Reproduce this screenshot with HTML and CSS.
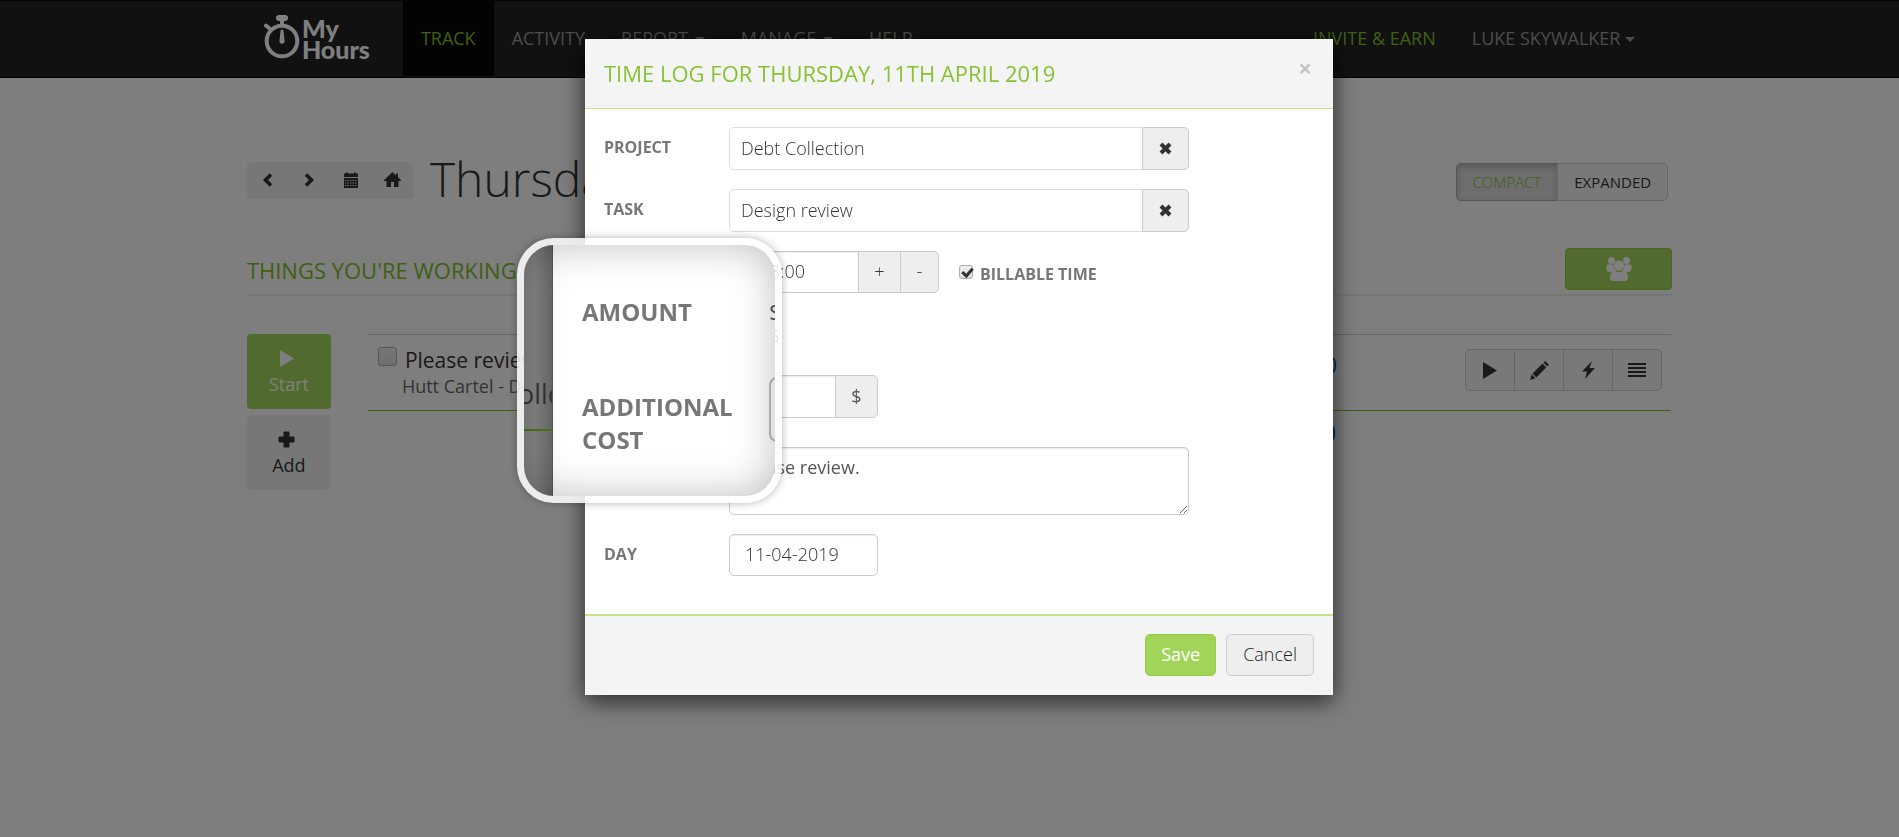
FILE: index.html
```html
<!DOCTYPE html>
<html lang="en">
<head>
<meta charset="utf-8">
<title>My Hours</title>
<link rel="stylesheet" href="styles.css">
</head>
<body>
<header class="topbar">
  <div class="container topbar-inner">
    <a class="logo" href="#">
      <svg class="logo-mark" viewBox="0 0 36 46" width="36" height="46" aria-hidden="true">
        <circle cx="18" cy="27" r="15.3" fill="none" stroke="currentColor" stroke-width="4"/>
        <rect x="12" y="1" width="12" height="6" rx="3" fill="currentColor"/>
        <path d="M16 6h4v5h-4zM18 15.500a1.500 1.500 0 0 1 1.500 1.500l1 9.500a2.600 2.600 0 1 1-5 0l1-9.500a1.500 1.500 0 0 1 1.500-1.500z" fill="currentColor"/>
        <path d="M2 11.500l3 2.500" stroke="currentColor" stroke-width="4" stroke-linecap="round"/>
      </svg>
      <span class="logo-text">My<br>Hours</span>
    </a>
    <nav class="nav">
      <a class="active" href="#">TRACK</a>
      <a href="#">ACTIVITY</a>
      <a href="#">REPORT <i class="caret"></i></a>
      <a href="#">MANAGE <i class="caret"></i></a>
      <a href="#">HELP</a>
    </nav>
    <nav class="nav nav-right">
      <a class="invite" href="#">INVITE &amp; EARN</a>
      <a href="#">LUKE SKYWALKER <i class="caret"></i></a>
    </nav>
  </div>
</header>

<main class="container">
  <div class="day-row">
    <div class="day-nav">
      <button aria-label="Previous day"><svg width="16" height="16" viewBox="0 0 16 16"><path d="M11 2.500L5.500 8l5.500 5.500" fill="none" stroke="currentColor" stroke-width="3.600"/></svg></button>
      <button aria-label="Next day"><svg width="16" height="16" viewBox="0 0 16 16"><path d="M5 2.500L10.500 8 5 13.500" fill="none" stroke="currentColor" stroke-width="3.600"/></svg></button>
      <button aria-label="Calendar"><svg width="16" height="16" viewBox="0 0 16 16"><path d="M1 1.500h2V.5h2v1h6v-1h2v1h2V5H1z" fill="currentColor"/><path d="M1 6h14v10H1z" fill="currentColor"/><path d="M2 8.500h12M2 11h12M2 13.500h12" stroke="#ddd" stroke-width="1" stroke-dasharray="1.500 1"/></svg></button>
      <button aria-label="Today"><svg width="17" height="16" viewBox="0 0 17 16"><path d="M8.500 0l3.500 3.400V1.500h2v3.800L17 8.200v.8h-2.500v6H10v-5H7v5H2.500V9H0v-.8z" fill="currentColor"/></svg></button>
    </div>
    <h1 class="day-title">Thursday, 11th April 2019</h1>
    <div class="view-toggle">
      <button class="pressed">COMPACT</button><button>EXPANDED</button>
    </div>
  </div>

  <div class="section-head">
    <h2>THINGS YOU'RE WORKING ON</h2>
    <button class="team" aria-label="Team">
      <svg width="26" height="26" viewBox="0 0 26 26"><g fill="currentColor"><circle cx="5.500" cy="4.500" r="3.500"/><circle cx="20.500" cy="4.500" r="3.500"/><path d="M.5 9.500c1-1.500 5-1.500 7-.5 0 3 1 4.500 2.500 5.500l-2 1.500H3C.5 16 0 12 .5 9.500zM25.500 9.500c-1-1.500-5-1.500-7-.5 0 3-1 4.500-2.500 5.500l2 1.500h5c2.500 0 3-4 2.500-6.500z"/><circle cx="13" cy="9.500" r="5.200"/><path d="M8.500 14.500c2.500 2 6.500 2 9 0 3.500.5 4.500 4.500 4.500 8 0 1.500-1 2.500-2.500 2.500h-13C5 25 4 24 4 22.500c0-3.500 1-7.500 4.500-8z"/></g></svg>
    </button>
  </div>

  <div class="work">
    <div class="side">
      <button class="side-btn start"><svg width="14" height="17" viewBox="0 0 14 17"><path d="M0 0l14 8.500L0 17z" fill="currentColor"/></svg>Start</button>
      <button class="side-btn add"><svg width="17" height="17" viewBox="0 0 17 17"><path d="M6 1h5v5h5v5h-5v5H6v-5H1V6h5z" fill="currentColor" stroke="currentColor" stroke-linejoin="round"/></svg>Add</button>
    </div>
    <div class="logs">
      <div class="log">
        <input type="checkbox" class="log-check" id="log1">
        <div class="log-text">
          <label for="log1">Please review.</label>
          <span>Hutt Cartel - Debt Collection</span>
        </div>
        <div class="log-time">8:00</div>
        <div class="log-actions">
          <button aria-label="Start"><svg width="14" height="17" viewBox="0 0 14 17"><path d="M0 0l14 8.500L0 17z" fill="currentColor"/></svg></button>
          <button aria-label="Edit"><svg width="19" height="19" viewBox="0 0 19 19"><path d="M12.500 2.600l3.800 3.800L6.300 16.400 2.500 12.600zM13.500 1.600L15.100 0l3.800 3.800-1.600 1.600zM1.700 13.500l3.700 3.700L0 19z" fill="currentColor"/></svg></button>
          <button aria-label="Quick log"><svg width="13" height="18" viewBox="0 0 13 18"><path d="M10 0L0 10.500h5L3 18 13 7H7.500z" fill="currentColor"/></svg></button>
          <button aria-label="Details"><svg width="18" height="16" viewBox="0 0 18 16"><path d="M0 2h18M0 6h18M0 10h18M0 14h18" stroke="currentColor" stroke-width="2.200"/></svg></button>
        </div>
      </div>
      <div class="total">8:00</div>
    </div>
  </div>
</main>

<div class="backdrop">
  <section class="modal" role="dialog" aria-labelledby="dialog-title">
    <header class="modal-head">
      <h2 id="dialog-title">TIME LOG FOR THURSDAY, 11TH APRIL 2019</h2>
      <button class="close" aria-label="Close">×</button>
    </header>
    <form class="form">
      <label for="project">PROJECT</label>
      <div class="group wide">
        <input id="project" type="text" value="Debt Collection">
        <button type="button" aria-label="Clear project"><svg width="13" height="13" viewBox="0 0 13 13"><path d="M2 2l9 9M11 2l-9 9" stroke="currentColor" stroke-width="4"/></svg></button>
      </div>
      <label for="task">TASK</label>
      <div class="group wide">
        <input id="task" type="text" value="Design review">
        <button type="button" aria-label="Clear task"><svg width="13" height="13" viewBox="0 0 13 13"><path d="M2 2l9 9M11 2l-9 9" stroke="currentColor" stroke-width="4"/></svg></button>
      </div>
      <label for="time">TIME</label>
      <div class="time-row">
        <div class="group time">
          <input id="time" type="text" value="0:28:00">
          <button type="button">+</button>
          <button type="button">-</button>
        </div>
        <label class="billable"><input type="checkbox" checked>BILLABLE TIME</label>
      </div>
      <span class="label">AMOUNT</span>
      <output class="amount">$ 0.45</output>
      <label for="cost">ADDITIONAL COST</label>
      <div class="group small">
        <input id="cost" type="text">
        <span class="addon">$</span>
      </div>
      <label for="note">NOTE</label>
      <textarea id="note">Please review.</textarea>
      <label for="day">DAY</label>
      <input class="day" id="day" type="text" value="11-04-2019">
    </form>
    <footer class="modal-foot">
      <button class="save">Save</button>
      <button class="cancel">Cancel</button>
    </footer>

    <div class="lens" aria-hidden="true">
      <div class="lens-view">
        <div class="lens-page"><span>olle</span></div>
        <div class="lens-form">
          <b>AMOUNT</b><i>$</i>
          <b>ADDITIONAL<br>COST</b><em></em>
        </div>
      </div>
    </div>
  </section>
</div>
</body>
</html>
```
FILE: styles.css
```css
* { box-sizing: border-box; }
body {
  margin: 0;
  min-height: 100vh;
  background: #fdfdfd;
  color: #333;
  font: 300 18px/26px "Open Sans", "Noto Sans", sans-serif;
  overflow: hidden;
}
button, input, textarea { font: inherit; color: inherit; }
button { cursor: pointer; }
h1, h2 { margin: 0; font-weight: 300; }
svg { display: block; }
.container {
  width: calc(75% + 1px);
  margin: 0 auto;
  position: relative;
  left: 10px;
}

.topbar { background: #222; border-top: 1px solid #080808; border-bottom: 1px solid #000; height: 78px; }
.topbar-inner { display: flex; height: 75px; }
.logo { display: flex; width: 156px; padding: 13px 0 0 17px; color: #fff; text-decoration: none; }
.logo-mark { flex: none; }
.logo-text { font: 900 25px/21px Lato, sans-serif; padding: 4px 0 0 2px; }
.nav { display: flex; }
.nav a { padding: 17px 18px 0; line-height: 40px; color: #999; text-decoration: none; white-space: nowrap; font-weight: 400; }
.nav .active { background: #060606; color: #7fbf26; }
.nav .invite { color: #7fbf26; }
.nav-right { margin-left: auto; padding-right: 19px; }
.caret { display: inline-block; border: 5px solid transparent; border-top-color: currentColor; border-bottom: 0; vertical-align: 3px; margin-left: 2px; }
.nav-right .caret { margin-left: 0; }

.day-row { display: flex; align-items: center; height: 68px; margin-top: 68px; }
.day-nav { display: flex; background: #efefef; border-radius: 4px; height: 37px; width: 166px; }
.day-nav button { flex: 1; border: 0; background: none; padding: 0; display: flex; align-items: center; justify-content: center; }
.day-title { font-size: 48px; line-height: 66px; padding-bottom: 2px; margin-left: 17px; flex: 1; white-space: nowrap; }
.view-toggle { display: flex; margin: 4px 4px 0 0; }
.view-toggle button { height: 38px; padding: 0 16px; font-size: 15px; background: #f3f3f3; border: 1px solid #ccc; border-radius: 0 5px 5px 0; font-weight: 400; }
.view-toggle .pressed { border-radius: 5px 0 0 5px; border-color: #aaa; background: #dcdcdc; color: #7fbf26; box-shadow: inset 0 3px 6px rgba(0, 0, 0, .2); margin-right: -1px; font-weight: 300; }

.section-head { display: flex; justify-content: space-between; height: 82px; border-bottom: 2px solid #eee; padding: 34px 0 4px; }
.section-head h2 { font-size: 22px; line-height: 44px; color: #7fbf26; font-weight: 400; }
.team { width: 107px; height: 42px; border: 1px solid #97c93d; border-radius: 4px; background: #a3d45a; color: #fff; display: flex; align-items: center; justify-content: center; }

.work { display: flex; gap: 37px; margin-top: 38px; }
.side { display: flex; flex-direction: column; gap: 6px; width: 84px; }
.side-btn { height: 75px; border: 0; border-radius: 4px; padding: 7px 0 0; display: flex; flex-direction: column; align-items: center; justify-content: center; gap: 4px; background: #efefef; font-weight: 400; }
.side-btn svg { margin: -4px 4px 0 0; }
.start { background: #a3d45a; color: #fff; }
.logs { flex: 1; padding-right: 1px; }
.log { display: flex; border-top: 1px solid #ccc; border-bottom: 1px solid #7fbf26; height: 77px; padding: 11px 10px 0; }
.log-check { appearance: none; width: 19px; height: 19px; margin: 1px 5px 0 0; border: 1px solid #aaa; border-radius: 3px; background: linear-gradient(#eee, #ddd); }
.log-text { flex: 1; }
.log-text label { display: block; font-size: 21px; line-height: 28px; font-weight: 400; padding-left: 3px; }
.log-text span { display: block; line-height: 25px; color: #666; font-weight: 400; }
.log-time { font-size: 21px; line-height: 38px; color: #05a; width: 45px; margin-right: 128px; font-weight: 400; text-align: right; }
.log-actions { display: flex; align-self: flex-start; margin: 3px -1px 0 0; }
.log-actions button { width: 50px; height: 42px; margin-right: -1px; border: 1px solid #ccc; background: #f3f3f3; display: flex; align-items: center; justify-content: center; }
.log-actions button:first-child { border-radius: 5px 0 0 5px; }
.log-actions button:last-child { border-radius: 0 5px 5px 0; margin-right: 0; }
.total { text-align: right; padding: 8px 335px 0 0; font-size: 21px; line-height: 28px; font-weight: 400; color: #037; }

.backdrop { position: fixed; inset: 0; background: rgba(0, 0, 0, .5); padding: 39px 0 0 19px; }
.modal { position: relative; width: 748px; margin: 0 auto; background: #fff; box-shadow: 0 6px 22px rgba(0, 0, 0, .7); color: #555; }
.modal-head { display: flex; justify-content: space-between; height: 70px; padding: 0 21px 0 19px; background: #f4f4f4; border-bottom: 1px solid #c3e48c; }
.modal-head h2 { font-size: 22px; line-height: 68px; color: #87c232; font-weight: 400; }
.close { border: 0; padding: 0; background: none; font-size: 24px; line-height: 24px; height: 24px; margin-top: 17px; font-weight: 700; color: #c4c4c4; }

.form { display: grid; grid-template-columns: 125px 1fr; row-gap: 19px; padding: 18px 19px 38px; align-items: start; }
.form label, .label { font-size: 16px; line-height: 22px; font-weight: 700; color: #777; padding-top: 9px; }
.group { display: flex; height: 43px; }
.wide { width: 460px; }
.time { width: 210px; height: 42px; }
.small { width: 149px; }
.group input, textarea, .day { flex: 1; min-width: 0; border: 1px solid #ccc; border-radius: 5px; background: #fff; padding: 0 11px 2px; color: #333; box-shadow: inset 0 1px 1px rgba(0, 0, 0, .08); outline: 0; }
.group input { border-radius: 5px 0 0 5px; }
.time input { padding-left: 15px; }
.wide input { border-color: #ddd; box-shadow: none; }
.group button, .addon { border: 1px solid #ccc; margin-left: -1px; background: #eee; display: flex; align-items: center; justify-content: center; padding: 0 0 2px; width: 43px; color: #333; }
.wide button { width: 47px; padding: 0; }
.time button:last-child { width: 39px; }
.group > :last-child { border-radius: 0 5px 5px 0; }
.time-row { display: flex; align-items: center; }
.form .billable { display: flex; align-items: center; gap: 7px; margin-left: 20px; padding: 3px 0 0; }
.billable input { appearance: none; width: 14px; height: 14px; margin: 0 0 4px; border: 1px solid #aaa; border-radius: 3px; background: linear-gradient(#eee, #ddd); position: relative; }
.billable input::after { content: ""; position: absolute; left: 4px; top: 0; width: 4px; height: 8px; border: solid #333; border-width: 0 3px 3px 0; transform: rotate(42deg); }
.amount { line-height: 26px; height: 44px; padding-top: 11px; font-weight: 400; }
.addon { font-weight: 400; color: #555; }
.small { margin-bottom: 9px; }
textarea { width: 460px; height: 68px; padding: 6px 11px; resize: both; font-weight: 400; display: block; }
.form textarea { color: #555; }
.day { width: 149px; height: 42px; padding: 0 15px 2px; }
.modal-foot { display: flex; justify-content: flex-end; gap: 10px; padding: 18px 19px 19px; background: #f4f4f4; border-top: 2px solid #c3e48c; }
.modal-foot button { height: 42px; padding: 0 16px 2px; border-radius: 5px; border: 1px solid #ccc; background: #eee; color: #222; }
.modal-foot .save { background: #a3d45a; border-color: #97cc45; color: #fff; font-weight: 400; padding: 0 15px 2px; }

.lens { position: absolute; left: -68px; top: 199px; width: 265px; height: 265px; border-radius: 37px; border: 7px solid rgba(255, 255, 255, .85); box-shadow: 0 0 8px rgba(0, 0, 0, .3); }
.lens-view { position: relative; height: 100%; display: flex; border-radius: 30px; overflow: hidden; background: #fff; color: #777; }
.lens-view::after { content: ""; position: absolute; inset: 0; border-radius: 30px; box-shadow: inset 0 0 40px rgba(0, 0, 0, .26); }
.lens-page { width: 28px; flex: none; background: linear-gradient(90deg, #848484 40%, #666); overflow: hidden; color: #333; font-size: 27px; line-height: 36px; padding-top: 131px; }
.lens-page span { display: block; height: 55px; margin-left: -6px; border-bottom: 2px solid #4c7513; font-weight: 400; }
.lens-form { flex: 1; display: grid; grid-template-columns: 187px 1fr; grid-template-rows: 95px 1fr; padding: 50px 0 0 29px; border-left: 1px solid #555; overflow: hidden; font-size: 24px; line-height: 33px; }
.lens-form b { font-weight: 700; }
.lens-form i { font-style: normal; color: #555; font-weight: 400; }
.lens-form em { width: 60px; height: 65px; margin-top: -13px; border: 2px solid #bbb; border-radius: 8px; }
```
